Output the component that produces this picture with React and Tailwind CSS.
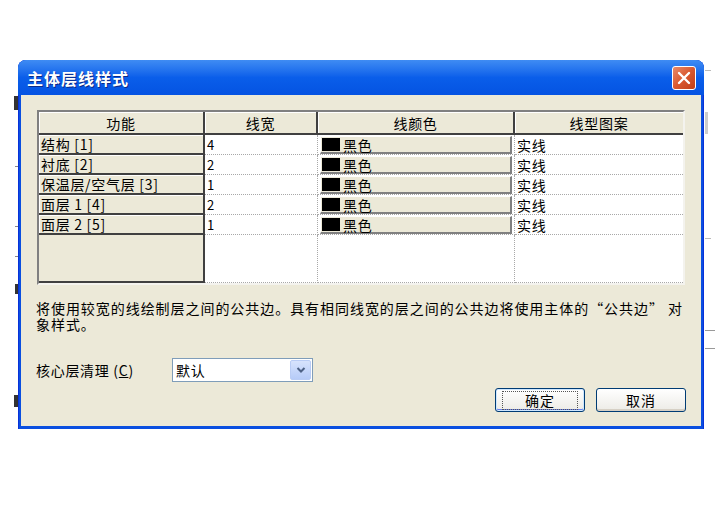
import React from 'react';

const font = "font-['Noto_Sans_CJK_SC','Liberation_Sans',sans-serif]";

const rows = [
  { name: '结构 [1]', width: '4' },
  { name: '衬底 [2]', width: '2' },
  { name: '保温层/空气层 [3]', width: '1' },
  { name: '面层 1 [4]', width: '2' },
  { name: '面层 2 [5]', width: '1' },
];

function HeaderCell({ children, last }) {
  return (
    <div
      className={`h-[23px] flex items-center justify-center bg-[#ece9d8] border-b-2 border-b-[#404040] shadow-[inset_1px_1px_0_#ffffff] ${
        last ? '' : 'border-r-2 border-r-[#404040]'
      }`}
    >
      <span className="text-[14px] leading-none tracking-[0.7px] text-black">{children}</span>
    </div>
  );
}

function Row({ row }) {
  return (
    <>
      <div className="h-[20px] flex items-center pl-[2px] bg-[#ece9d8] border-r-2 border-r-[#404040] border-b-2 border-b-[#404040] shadow-[inset_1px_1px_0_#ffffff]">
        <span className="text-[14px] leading-none tracking-[0.7px] whitespace-nowrap">{row.name}</span>
      </div>
      <div className="h-[20px] flex items-center pl-[2px] bg-white border-r border-dotted border-r-[#a8a8a8] border-b border-b-[#a8a8a8]">
        <span className="text-[13px] leading-none text-black">{row.width}</span>
      </div>
      <div className="h-[20px] bg-white border-r border-dotted border-r-[#a8a8a8] border-b border-b-[#a8a8a8] pl-[2px] pr-[2px] pt-[1px]">
        <div className="h-[18px] flex items-center bg-[#ece9d8] border-t border-l border-t-white border-l-white border-r-2 border-b-2 border-r-[#808080] border-b-[#808080]">
          <div className="w-[18px] h-[13px] bg-black ml-[1px]" />
          <span className="ml-[3px] text-[14px] leading-none tracking-[0.7px]">黑色</span>
        </div>
      </div>
      <div className="h-[20px] flex items-center pl-[2px] bg-white border-b border-dotted border-b-[#a8a8a8]">
        <span className="text-[14px] leading-none tracking-[0.7px]">实线</span>
      </div>
    </>
  );
}

export default function App() {
  return (
    <div className={`relative w-[720px] h-[506px] bg-white overflow-hidden ${font} text-black`}>
      {/* bits of the page behind the dialog */}
      <div className="absolute left-[14px] top-[96px] w-[4px] h-[14px] bg-[#333]" />
      <div className="absolute left-[15px] top-[166px] w-[3px] h-[1px] bg-[#888]" />
      <div className="absolute left-[15px] top-[226px] w-[3px] h-[1px] bg-[#888]" />
      <div className="absolute left-[15px] top-[256px] w-[3px] h-[1px] bg-[#888]" />
      <div className="absolute left-[15px] top-[284px] w-[3px] h-[10px] bg-[#333]" />
      <div className="absolute left-[14px] top-[395px] w-[4px] h-[12px] bg-[#333]" />
      <div className="absolute left-[705px] top-[70px] w-[6px] h-[1px] bg-[#bbb]" />
      <div className="absolute left-[705px] top-[112px] w-[3px] h-[22px] bg-[#ccc]" />
      <div className="absolute left-[705px] top-[238px] w-[6px] h-[1px] bg-[#bbb]" />
      <div className="absolute left-[705px] top-[330px] w-[10px] h-[1px] bg-[#999]" />
      <div className="absolute left-[705px] top-[348px] w-[10px] h-[1px] bg-[#999]" />

      <div className="pt-[60px] pl-[18px]">
        <div className="w-[686px] h-[369px] flex flex-col rounded-t-[8px] bg-[#0a4fe0] px-[3px] pb-[3px] shadow-[inset_1px_0_0_#0831d9,inset_-1px_0_0_#0831d9]">
          {/* title bar */}
          <div className="h-[35px] -mx-[3px] px-[9px] flex items-center justify-between rounded-t-[8px] bg-gradient-to-b from-[#3f8cf3] via-[#0a5eea] to-[#0553e2]">
            <span className="text-[16px] font-bold tracking-[1px] text-white [text-shadow:1px_1px_0_#0a2a8a]">
              主体层线样式
            </span>
            <div className="w-[24px] h-[24px] -mr-[1px] mt-[1px] rounded-[3px] border border-white bg-gradient-to-br from-[#e98a68] via-[#d9582f] to-[#c13e16] flex items-center justify-center">
              <svg width="14" height="14" viewBox="0 0 14 14">
                <path d="M2 2 L12 12 M12 2 L2 12" stroke="white" strokeWidth="2.4" strokeLinecap="round" />
              </svg>
            </div>
          </div>

          {/* body */}
          <div className="flex-1 bg-[#ece9d8] pl-[16px] pr-[16px] pt-[15px] flex flex-col">
            {/* table */}
            <div className="w-[648px] h-[175px] border-2 border-t-[#808080] border-l-[#808080] border-r-[#f4f3ee] border-b-[#f4f3ee] bg-white flex flex-col">
              <div className="grid grid-cols-[166px_113px_197px_168px]">
                <HeaderCell>功能</HeaderCell>
                <HeaderCell>线宽</HeaderCell>
                <HeaderCell>线颜色</HeaderCell>
                <HeaderCell last>线型图案</HeaderCell>
                {rows.map((r) => (
                  <Row key={r.name} row={r} />
                ))}
              </div>
              <div className="flex-1 grid grid-cols-[166px_113px_197px_168px]">
                <div className="bg-[#ece9d8] border-r-2 border-r-[#404040] border-b-2 border-b-[#404040]" />
                <div className="bg-white border-r border-dotted border-r-[#a8a8a8] border-b border-b-[#a8a8a8]" />
                <div className="bg-white border-r border-dotted border-r-[#a8a8a8] border-b border-b-[#a8a8a8]" />
                <div className="bg-white border-b border-dotted border-b-[#a8a8a8]" />
              </div>
            </div>

            {/* description */}
            <p className="mt-[15px] -ml-[1px] w-[652px] text-[14px] leading-[16px] tracking-[0.95px]">
              将使用较宽的线绘制层之间的公共边。具有相同线宽的层之间的公共边将使用主体的“公共边” 对象样式。
            </p>

            {/* core layer cleanup */}
            <div className="mt-[26px] -ml-[1px] flex items-center h-[24px]">
              <span className="w-[136px] text-[14px] tracking-[0.7px]">
                核心层清理 (<span className="underline">C</span>)
              </span>
              <div className="w-[141px] h-[24px] border border-[#7f9db9] bg-white flex items-center justify-between pl-[3px] pr-[1px]">
                <span className="text-[14px] tracking-[0.7px]">默认</span>
                <div className="w-[21px] h-[20px] rounded-[2px] border border-[#b9ccf5] bg-gradient-to-b from-[#d7e3fd] to-[#b6cbf8] flex items-center justify-center">
                  <svg width="10" height="8" viewBox="0 0 10 8">
                    <path d="M1.5 2 L5 5.5 L8.5 2" fill="none" stroke="#4d6185" strokeWidth="2" />
                  </svg>
                </div>
              </div>
            </div>

            {/* buttons */}
            <div className="mt-[6px] flex justify-end gap-[11px] -mr-[1px]">
              <button className="w-[90px] h-[24px] rounded-[3px] border border-[#003c74] bg-gradient-to-b from-white to-[#ecebe6] shadow-[inset_0_0_0_1px_#cee7ff,inset_0_-1px_0_1px_#6982ee] flex items-center justify-center">
                <span className="px-[22px] py-[1px] border border-dotted border-[#555] text-[14px] leading-[15px] tracking-[1px]">确定</span>
              </button>
              <button className="w-[90px] h-[24px] rounded-[3px] border border-[#003c74] bg-gradient-to-b from-white to-[#ecebe6] shadow-[inset_0_-2px_0_#d6d0c5] flex items-center justify-center">
                <span className="text-[14px] leading-[15px] tracking-[1px]">取消</span>
              </button>
            </div>
          </div>
        </div>
      </div>
    </div>
  );
}
